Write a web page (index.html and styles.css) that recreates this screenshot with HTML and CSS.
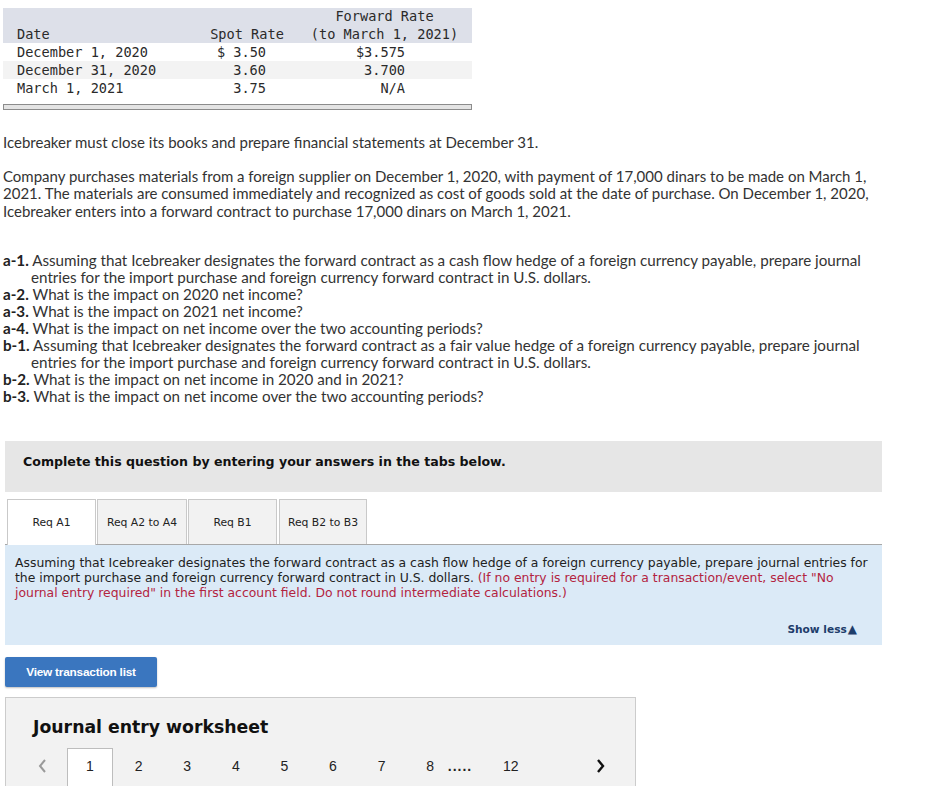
FILE: index.html
```html
<!DOCTYPE html>
<html>
<head>
<meta charset="utf-8">
<link rel="stylesheet" href="styles.css">
</head>
<body>
<div class="page">
  <div class="rates">
    <div class="rate-row head">
      <div class="c1 bottom">Date</div>
      <div class="c2 bottom">Spot Rate</div>
      <div class="c3">Forward Rate<br>(to March 1, 2021)</div>
    </div>
    <div class="rate-row">
      <div class="c1">December 1, 2020</div>
      <div class="c2 val">$ 3.50</div>
      <div class="c3 val">$3.575</div>
    </div>
    <div class="rate-row alt">
      <div class="c1">December 31, 2020</div>
      <div class="c2 val">3.60</div>
      <div class="c3 val">3.700</div>
    </div>
    <div class="rate-row">
      <div class="c1">March 1, 2021</div>
      <div class="c2 val">3.75</div>
      <div class="c3 val">N/A</div>
    </div>
  </div>
  <div class="hscroll"></div>

  <p class="text first">Icebreaker must close its books and prepare financial statements at December 31.</p>
  <p class="text">Company purchases materials from a foreign supplier on December 1, 2020, with payment of 17,000 dinars to be made on March 1,<br>2021. The materials are consumed immediately and recognized as cost of goods sold at the date of purchase. On December 1, 2020,<br>Icebreaker enters into a forward contract to purchase 17,000 dinars on March 1, 2021.</p>

  <div class="questions">
    <p class="q"><b>a-1.</b> Assuming that Icebreaker designates the forward contract as a cash flow hedge of a foreign currency payable, prepare journal<br>entries for the import purchase and foreign currency forward contract in U.S. dollars.</p>
    <p class="q"><b>a-2.</b> What is the impact on 2020 net income?</p>
    <p class="q"><b>a-3.</b> What is the impact on 2021 net income?</p>
    <p class="q"><b>a-4.</b> What is the impact on net income over the two accounting periods?</p>
    <p class="q"><b>b-1.</b> Assuming that Icebreaker designates the forward contract as a fair value hedge of a foreign currency payable, prepare journal<br>entries for the import purchase and foreign currency forward contract in U.S. dollars.</p>
    <p class="q"><b>b-2.</b> What is the impact on net income in 2020 and in 2021?</p>
    <p class="q"><b>b-3.</b> What is the impact on net income over the two accounting periods?</p>
  </div>

  <div class="complete">Complete this question by entering your answers in the tabs below.</div>

  <div class="tabs">
    <div class="tab active t1">Req A1</div>
    <div class="tab t2">Req A2 to A4</div>
    <div class="tab t3">Req B1</div>
    <div class="tab t4">Req B2 to B3</div>
  </div>
  <div class="panel">
    <p class="instr">Assuming that Icebreaker designates the forward contract as a cash flow hedge of a foreign currency payable, prepare journal entries for<br>the import purchase and foreign currency forward contract in U.S. dollars. <span class="red">(If no entry is required for a transaction/event, select "No<br>journal entry required" in the first account field. Do not round intermediate calculations.)</span></p>
    <div class="showless">Show less<span class="tri">&#9650;</span></div>
  </div>

  <button class="viewbtn">View transaction list</button>

  <div class="worksheet">
    <h2 class="ws-title">Journal entry worksheet</h2>
    <div class="pager">
      <span class="arrow prev">
        <svg width="10" height="16" viewBox="0 0 10 16"><path d="M8 2 L3 8 L8 14" fill="none" stroke="#9a9a9a" stroke-width="2"/></svg>
      </span>
      <span class="pg current">1</span>
      <span class="pg">2</span>
      <span class="pg">3</span>
      <span class="pg">4</span>
      <span class="pg">5</span>
      <span class="pg">6</span>
      <span class="pg">7</span>
      <span class="pg">8</span>
      <span class="dots">.....</span>
      <span class="pg">12</span>
      <span class="arrow next">
        <svg width="10" height="16" viewBox="0 0 10 16"><path d="M2 2 L7 8 L2 14" fill="none" stroke="#111" stroke-width="2.4"/></svg>
      </span>
    </div>
  </div>
</div>
</body>
</html>
```

FILE: styles.css
```css
html, body {
  margin: 0;
  padding: 0;
  background: #ffffff;
}

.page {
  padding: 8px 0 0 0;
  color: #222;
}

/* rates table */
.rates {
  margin-left: 3px;
  width: 469px;
  font-family: "DejaVu Sans Mono", "Liberation Mono", monospace;
  font-size: 13.6px;
  color: #2a2a2a;
}

.rate-row {
  display: grid;
  grid-template-columns: 194px 100px 175px;
  line-height: 18px;
}

.rate-row.head {
  background: #dde0e9;
  line-height: 17.5px;
}

.rate-row.alt {
  background: #f3f3f3;
}

.c1 {
  padding-left: 14px;
}

.c2 {
  text-align: center;
}

.c3 {
  text-align: center;
}

.bottom {
  align-self: end;
}

.c2.val {
  text-align: right;
  padding-right: 31px;
}

.c3.val {
  text-align: right;
  padding-right: 67px;
}

.hscroll {
  margin: 7px 0 0 3px;
  width: 467px;
  height: 4px;
  border: 1px solid #8c8c8c;
  background: #e4e4e4;
}

/* body text */
.text {
  font-family: Lato, "Open Sans", sans-serif;
  font-size: 15px;
  line-height: 17.5px;
  color: #333;
  margin: 0 0 0 3px;
  white-space: nowrap;
}

.text.first {
  margin-top: 24px;
  margin-bottom: 16px;
}

.questions {
  margin: 32px 0 0 3px;
  font-family: Lato, "Open Sans", sans-serif;
  font-size: 15.2px;
  line-height: 17px;
  color: #333;
}

.q {
  margin: 0;
  padding-left: 28px;
  text-indent: -28px;
  white-space: nowrap;
}

.q b {
  font-weight: 700;
  color: #222;
}

/* complete box */
.complete {
  margin: 36px 0 0 5px;
  width: 877px;
  height: 51px;
  box-sizing: border-box;
  padding: 13px 0 0 18px;
  background: #e6e6e6;
  font-family: "DejaVu Sans", Verdana, sans-serif;
  font-weight: bold;
  font-size: 12.6px;
  color: #111;
}

/* tabs */
.tabs {
  display: flex;
  margin: 7px 0 0 7px;
  gap: 1px;
  height: 45px;
  position: relative;
  z-index: 1;
}

.tab {
  box-sizing: border-box;
  height: 45px;
  border: 1px solid #c9c9c9;
  border-bottom: none;
  background: #f2f2f2;
  font-family: "DejaVu Sans", Verdana, sans-serif;
  font-size: 10.8px;
  color: #222;
  display: flex;
  align-items: center;
  justify-content: center;
}

.tab.active {
  background: #ffffff;
  height: 46px;
}

.t1 { width: 89px; }
.t2 { width: 90px; }
.t3 { width: 89px; }
.t4 { width: 88px; margin-left: 1px; }

.panel {
  margin-left: 5px;
  width: 877px;
  height: 101px;
  box-sizing: border-box;
  border-top: 1px solid #a8a8a8;
  background: #dbeaf7;
  padding: 10px 10px 0 10px;
  font-family: "DejaVu Sans", Verdana, sans-serif;
  position: relative;
}

.instr {
  margin: 0;
  font-size: 12.4px;
  line-height: 15px;
  color: #222;
  white-space: nowrap;
}

.red {
  color: #b3243f;
}

.showless {
  position: absolute;
  right: 25px;
  bottom: 9px;
  font-size: 10.6px;
  font-weight: bold;
  color: #1e3d6b;
}

.tri {
  font-size: 12px;
  margin-left: 1px;
}

/* button */
.viewbtn {
  display: block;
  margin: 12px 0 0 5px;
  width: 152px;
  height: 30px;
  border: none;
  border-radius: 2px;
  background: #3a76bf;
  color: #ffffff;
  font-family: "Liberation Sans", Arial, sans-serif;
  font-weight: bold;
  font-size: 11.8px;
  letter-spacing: -0.2px;
  box-shadow: 0 1px 2px rgba(0,0,0,0.25);
}

/* worksheet */
.worksheet {
  margin: 10px 0 0 5px;
  width: 631px;
  height: 100px;
  box-sizing: border-box;
  border: 1px solid #cccccc;
  background: #f2f2f2;
  padding: 18px 0 0 27px;
}

.ws-title {
  margin: 0;
  font-family: "DejaVu Sans", Verdana, sans-serif;
  font-size: 17.3px;
  font-weight: bold;
  color: #111;
  line-height: 22px;
}

.pager {
  display: flex;
  align-items: flex-start;
  margin-top: 10px;
  font-family: "Liberation Sans", Arial, sans-serif;
  font-size: 14px;
  color: #222;
}

.arrow {
  height: 36px;
  display: flex;
  align-items: center;
}

.prev {
  width: 34px;
  padding-left: 4px;
  box-sizing: border-box;
}

.pg {
  width: 46px;
  height: 36px;
  margin-right: 2.6px;
  box-sizing: border-box;
  display: flex;
  align-items: center;
  justify-content: center;
}

.pg.current {
  background: #ffffff;
  border: 1px solid #bdbdbd;
  height: 40px;
  padding-bottom: 4px;
}

.dots {
  height: 36px;
  display: flex;
  align-items: center;
  margin-left: -8px;
  width: 40px;
  letter-spacing: 1px;
  font-weight: bold;
}

.next {
  margin-left: 60px;
}
```
